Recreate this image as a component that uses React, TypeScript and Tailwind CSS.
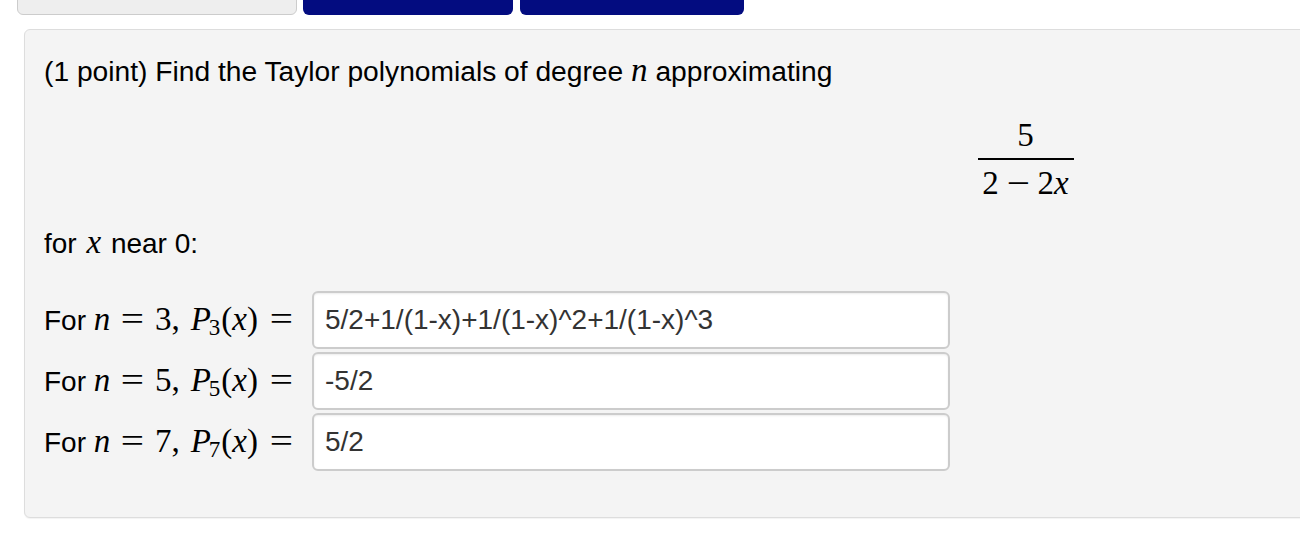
import React from 'react'

const sans = { fontFamily: '"Liberation Sans", Arial, sans-serif' }

const M: React.FC<{ children: React.ReactNode; className?: string }> = ({ children, className }) => (
    <span className={`font-['Liberation_Serif',_'Times_New_Roman',_serif] text-[33px] ${className ?? ''}`}>{children}</span>
)

const rows = [
    { n: '3', value: '5/2+1/(1-x)+1/(1-x)^2+1/(1-x)^3' },
    { n: '5', value: '-5/2' },
    { n: '7', value: '5/2' },
]

const App: React.FC = () => {
    return (
        <div className="w-[1300px] h-[552px] overflow-hidden bg-white text-black" style={sans}>
            <div className="flex gap-[6px] pl-[17px] -mt-[30px]">
                <div className="w-[280px] h-[45px] rounded-[6px] bg-[#eeeeee] border border-[#cccccc]" />
                <div className="w-[210px] h-[45px] rounded-[6px] bg-[#030c80]" />
                <div className="w-[224px] h-[45px] rounded-[6px] bg-[#030c80] ml-[1px]" />
            </div>

            <div className="ml-[24px] mt-[14px] w-[2010px] rounded-[6px] border border-[#dddddd] bg-[#f4f4f4] shadow-[0_1px_1px_rgba(0,0,0,0.05)] pl-[19px] pt-[21px] pb-[46px]">
                <div className="h-[39px] leading-[39px] text-[28.2px]">
                    (1 point) Find the Taylor polynomials of degree <M className="italic">n</M> approximating
                </div>

                <div className="flex justify-center pr-[26px] mt-[27px]">
                    <div className="flex flex-col items-center">
                        <M className="leading-[36px]">5</M>
                        <div className="h-[2px] w-[96px] bg-black mt-[5px]" />
                        <M className="leading-[36px] mt-[5px]">
                            2<span className="mx-[10px] inline-block scale-x-125">−</span>2<span className="italic">x</span>
                        </M>
                    </div>
                </div>

                <div className="mt-[22px] h-[39px] leading-[39px] text-[28px]">
                    for <M className="italic mx-[2px]">x</M> near 0:
                </div>

                <div className="mt-[28px] flex flex-col gap-[2px]">
                    {rows.map((r) => (
                        <div key={r.n} className="flex items-center h-[59px]">
                            <div className="w-[268px] whitespace-nowrap text-[28px] leading-[39px]">
                                For{' '}
                                <M>
                                    <span className="italic">n</span>
                                    <span className="mx-[13px] inline-block scale-x-125">=</span>
                                    {r.n},
                                    <span className="italic ml-[11px]">P</span>
                                    <sub className="text-[23px] not-italic -ml-[2px]">{r.n}</sub>
                                    <span className="ml-[1px]">(</span>
                                    <span className="italic">x</span>)
                                    <span className="ml-[14px] inline-block scale-x-125">=</span>
                                </M>
                            </div>
                            <div className="w-[638px] h-[58px] rounded-[6px] border-2 border-[#cccccc] bg-white shadow-[inset_0_1px_2px_rgba(0,0,0,0.08)] flex items-center pl-[11px] text-[28px] text-[#333333]">
                                {r.value}
                            </div>
                        </div>
                    ))}
                </div>
            </div>
        </div>
    )
}

export default App
